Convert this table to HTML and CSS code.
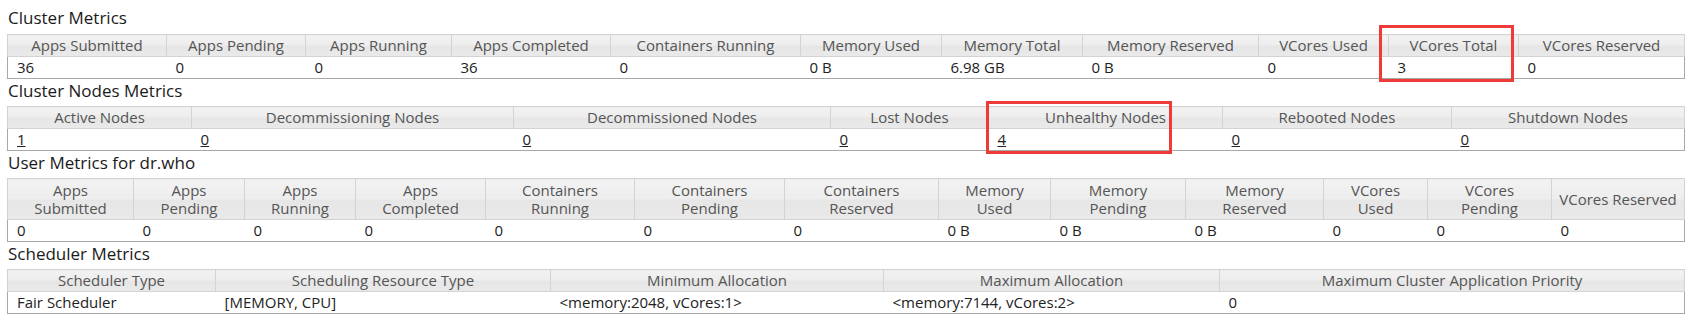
FILE: index.html
```html
<!DOCTYPE html>
<html>
<head>
<meta charset="utf-8">
<link rel="stylesheet" href="styles.css">
</head>
<body>
<div class="page">
  <h3 class="title first">Cluster Metrics</h3>
  <table class="metrics t1">
    <colgroup><col><col><col><col><col><col><col><col><col><col><col></colgroup>
    <thead><tr>
      <th>Apps Submitted</th><th>Apps Pending</th><th>Apps Running</th><th>Apps Completed</th><th>Containers Running</th><th>Memory Used</th><th>Memory Total</th><th>Memory Reserved</th><th>VCores Used</th><th>VCores Total</th><th>VCores Reserved</th>
    </tr></thead>
    <tbody><tr>
      <td>36</td><td>0</td><td>0</td><td>36</td><td>0</td><td>0 B</td><td>6.98 GB</td><td>0 B</td><td>0</td><td>3</td><td>0</td>
    </tr></tbody>
  </table>

  <h3 class="title">Cluster Nodes Metrics</h3>
  <table class="metrics t2">
    <colgroup><col><col><col><col><col><col><col></colgroup>
    <thead><tr>
      <th>Active Nodes</th><th>Decommissioning Nodes</th><th>Decommissioned Nodes</th><th>Lost Nodes</th><th>Unhealthy Nodes</th><th>Rebooted Nodes</th><th>Shutdown Nodes</th>
    </tr></thead>
    <tbody><tr>
      <td><a href="#">1</a></td><td><a href="#">0</a></td><td><a href="#">0</a></td><td><a href="#">0</a></td><td><a href="#">4</a></td><td><a href="#">0</a></td><td><a href="#">0</a></td>
    </tr></tbody>
  </table>

  <h3 class="title">User Metrics for dr.who</h3>
  <table class="metrics t3">
    <colgroup><col><col><col><col><col><col><col><col><col><col><col><col><col></colgroup>
    <thead><tr>
      <th>Apps<br>Submitted</th><th>Apps<br>Pending</th><th>Apps<br>Running</th><th>Apps<br>Completed</th><th>Containers<br>Running</th><th>Containers<br>Pending</th><th>Containers<br>Reserved</th><th>Memory<br>Used</th><th>Memory<br>Pending</th><th>Memory<br>Reserved</th><th>VCores<br>Used</th><th>VCores<br>Pending</th><th>VCores Reserved</th>
    </tr></thead>
    <tbody><tr>
      <td>0</td><td>0</td><td>0</td><td>0</td><td>0</td><td>0</td><td>0</td><td>0 B</td><td>0 B</td><td>0 B</td><td>0</td><td>0</td><td>0</td>
    </tr></tbody>
  </table>

  <h3 class="title">Scheduler Metrics</h3>
  <table class="metrics t4">
    <colgroup><col><col><col><col><col></colgroup>
    <thead><tr>
      <th>Scheduler Type</th><th>Scheduling Resource Type</th><th>Minimum Allocation</th><th>Maximum Allocation</th><th>Maximum Cluster Application Priority</th>
    </tr></thead>
    <tbody><tr>
      <td>Fair Scheduler</td><td>[MEMORY, CPU]</td><td>&lt;memory:2048, vCores:1&gt;</td><td>&lt;memory:7144, vCores:2&gt;</td><td>0</td>
    </tr></tbody>
  </table>

  <div class="mark mark-vcores"></div>
  <div class="mark mark-unhealthy"></div>
</div>
</body>
</html>
```
FILE: styles.css
```css
html, body {
  margin: 0;
  padding: 0;
  background: #fff;
}
body {
  font-family: "Open Sans", "Noto Sans", "DejaVu Sans", sans-serif;
  color: #222;
}
.page {
  position: relative;
  padding: 0 0 0 7px;
  width: 1677px;
}
.title {
  margin: 0;
  padding: 0 0 0 1px;
  height: 27px;
  font-size: 17px;
  font-weight: normal;
  line-height: 24px;
  color: #1a1a1a;
  box-sizing: border-box;
}
.title.first {
  height: 34px;
  padding-top: 6px;
}
.metrics {
  width: 1677px;
  table-layout: fixed;
  border-collapse: collapse;
  font-size: 15px;
}
.metrics th {
  font-weight: normal;
  color: #555;
  text-align: center;
  line-height: 17px;
  padding: 2px 4px;
  border: 1px solid #d3d3d3;
  background: linear-gradient(#f2f2f2 0%, #ededed 50%, #e6e6e6 50%, #e9e9e9 100%);
  white-space: nowrap;
  overflow: hidden;
}
.t3 th {
  line-height: 18px;
}
.metrics td {
  text-align: left;
  line-height: 17px;
  padding: 2px 8px 2px 9px;
  border-bottom: 1px solid #a8a8a8;
  color: #222;
  white-space: nowrap;
}
.metrics td:first-child { border-left: 1px solid #a8a8a8; }
.metrics td:last-child { border-right: 1px solid #a8a8a8; }
.metrics a {
  color: #222;
  text-decoration: underline;
}

.t1 col:nth-child(1) { width: 159px; }
.t1 col:nth-child(2) { width: 139px; }
.t1 col:nth-child(3) { width: 146px; }
.t1 col:nth-child(4) { width: 159px; }
.t1 col:nth-child(5) { width: 190px; }
.t1 col:nth-child(6) { width: 141px; }
.t1 col:nth-child(7) { width: 141px; }
.t1 col:nth-child(8) { width: 176px; }
.t1 col:nth-child(9) { width: 130px; }
.t1 col:nth-child(10) { width: 130px; }
.t1 col:nth-child(11) { width: 166px; }

.t2 col:nth-child(1) { width: 184px; }
.t2 col:nth-child(2) { width: 322px; }
.t2 col:nth-child(3) { width: 317px; }
.t2 col:nth-child(4) { width: 158px; }
.t2 col:nth-child(5) { width: 234px; }
.t2 col:nth-child(6) { width: 229px; }
.t2 col:nth-child(7) { width: 233px; }

.t3 col:nth-child(1) { width: 126px; }
.t3 col:nth-child(2) { width: 111px; }
.t3 col:nth-child(3) { width: 111px; }
.t3 col:nth-child(4) { width: 130px; }
.t3 col:nth-child(5) { width: 149px; }
.t3 col:nth-child(6) { width: 150px; }
.t3 col:nth-child(7) { width: 154px; }
.t3 col:nth-child(8) { width: 112px; }
.t3 col:nth-child(9) { width: 135px; }
.t3 col:nth-child(10) { width: 138px; }
.t3 col:nth-child(11) { width: 104px; }
.t3 col:nth-child(12) { width: 124px; }
.t3 col:nth-child(13) { width: 133px; }

.t4 col:nth-child(1) { width: 208px; }
.t4 col:nth-child(2) { width: 335px; }
.t4 col:nth-child(3) { width: 333px; }
.t4 col:nth-child(4) { width: 336px; }
.t4 col:nth-child(5) { width: 465px; }

.mark {
  position: absolute;
  border: 3px solid #ef3a3a;
  box-sizing: border-box;
  pointer-events: none;
}
.mark-vcores {
  left: 1379px;
  top: 25px;
  width: 135px;
  height: 57px;
}
.mark-unhealthy {
  left: 986px;
  top: 101px;
  width: 186px;
  height: 53px;
}
```
